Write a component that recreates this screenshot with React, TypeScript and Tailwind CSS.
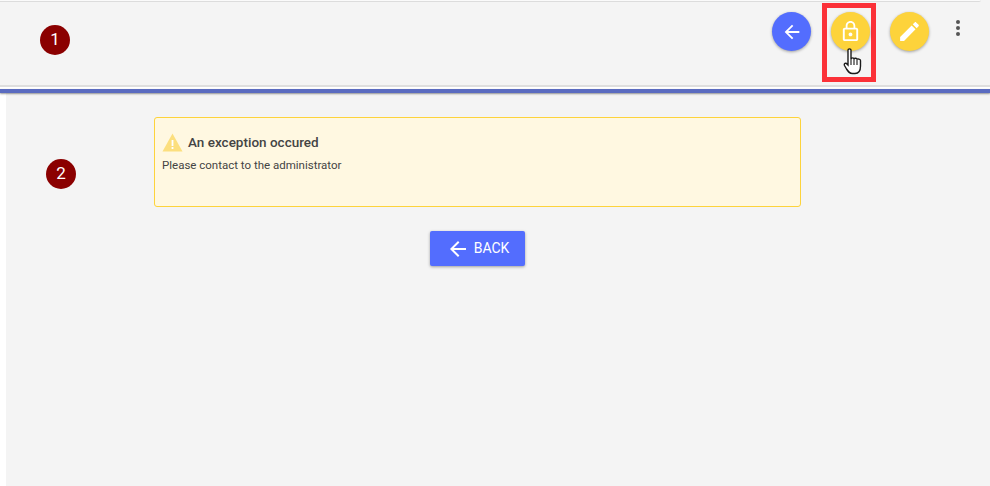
function Badge({ n, className }: { n: number; className: string }) {
	return (
		<div className={`absolute flex h-[30px] w-[30px] items-center justify-center rounded-full bg-[#8b0000] text-[17px] text-white ${className}`}>
			{n}
		</div>
	)
}

function Fab({ color, path, size }: { color: string; path: string; size: number }) {
	return (
		<div className={`flex h-[39px] w-[39px] items-center justify-center rounded-full shadow-[0_1px_3px_rgba(0,0,0,0.35)] ${color}`}>
			<svg width={size} height={size} viewBox="0 0 24 24" fill="white">
				<path d={path} />
			</svg>
		</div>
	)
}

const ARROW = "M20 11H7.83l5.59-5.59L12 4l-8 8 8 8 1.41-1.41L7.83 13H20v-2z"
const LOCK =
	"M12 17c1.1 0 2-.9 2-2s-.9-2-2-2-2 .9-2 2 .9 2 2 2zm6-9h-1V6c0-2.76-2.24-5-5-5S7 3.24 7 6v2H6c-1.1 0-2 .9-2 2v10c0 1.1.9 2 2 2h12c1.1 0 2-.9 2-2V10c0-1.1-.9-2-2-2zM8.9 6c0-1.71 1.39-3.1 3.1-3.1s3.1 1.39 3.1 3.1v2H8.9V6zM18 20H6V10h12v10z"
const EDIT =
	"M3 17.25V21h3.75L17.81 9.94l-3.75-3.75L3 17.25zM20.71 7.04c.39-.39.39-1.02 0-1.41l-2.34-2.34c-.39-.39-1.02-.39-1.41 0l-1.83 1.83 3.75 3.75 1.83-1.83z"

export default function App() {
	return (
		<div className="relative h-[486px] w-[990px] overflow-hidden bg-white font-['Roboto',sans-serif]">
			{/* Top edge */}
			<div className="flex h-[2px] bg-[#f4f4f4]">
				<div className="w-[981px] rounded-br-[2px] border-b border-[#dcdcdc] bg-[#fafafa]" />
			</div>

			{/* Toolbar */}
			<div className="h-[85px] border-b-2 border-[#dedede] bg-[#f4f4f4] pr-[30px] pt-[1px]">
				<div className="flex items-start justify-end">
					<div className="mt-[9px]">
						<Fab color="bg-[#536dfe]" path={ARROW} size={22} />
					</div>
					<div className="ml-[11px] border-[5px] border-[#fb3138] pb-[26px] pl-[4px] pr-[1px] pt-[4px]">
						<Fab color="bg-[#fdd33b]" path={LOCK} size={23} />
					</div>
					<div className="ml-[14px] mt-[9px]">
						<Fab color="bg-[#fdd33b]" path={EDIT} size={25} />
					</div>
					<div className="ml-[27px] mt-[17px] flex flex-col gap-[2px]">
						<div className="h-[4px] w-[4px] rounded-full bg-[#555]" />
						<div className="h-[4px] w-[4px] rounded-full bg-[#555]" />
						<div className="h-[4px] w-[4px] rounded-full bg-[#555]" />
					</div>
				</div>
			</div>

			{/* Content */}
			<div className="relative z-10 mt-[2px] h-[4px] bg-[#5a6bc0] shadow-[0_1px_2px_rgba(0,0,0,0.4)]" />
			<div className="ml-[6px] h-[393px] bg-[#f4f4f4] pl-[148px] pt-[24px]">
				<div className="w-[647px]">
					<div className="h-[90px] rounded-[3px] border border-[#fdd33b] bg-[#fff8e1] px-[7px] pt-[14px]">
						<div className="flex items-center gap-[5px]">
							<svg width="21" height="19" viewBox="0 0 21 19">
								<path d="M10.5 0.5 L20.5 18.5 L0.5 18.5 Z" fill="#fcdf7e" />
								<rect x="9.6" y="7" width="1.8" height="6" fill="#fff" />
								<rect x="9.6" y="14" width="1.8" height="2" fill="#fff" />
							</svg>
							<span className="text-[13.5px] font-medium text-[#444]">An exception occured</span>
						</div>
						<p className="mt-[5px] text-[11.5px] text-[#444]">Please contact to the administrator</p>
					</div>
					<div className="mt-[24px] flex justify-center">
						<button className="flex h-[35px] w-[95px] items-center justify-center gap-[4px] rounded-[2px] bg-[#536dfe] text-[14px] text-white shadow-[0_1px_3px_rgba(0,0,0,0.35)]">
							<svg width="24" height="24" viewBox="0 0 24 24" fill="white">
								<path d={ARROW} />
							</svg>
							BACK
						</button>
					</div>
				</div>
			</div>

			<Badge n={1} className="left-[40px] top-[25px]" />
			<Badge n={2} className="left-[46px] top-[159px]" />

			{/* Pointer cursor */}
			<svg className="absolute left-[843px] top-[47px]" width="22" height="28" viewBox="0 0 22 28">
				<path
					d="M5 3 C5 1.5 8 1.5 8 3 V12 C8.5 10.5 11 10.5 11 12 C11.5 11 14 11 14 12.5 C14.5 11.5 17.5 12 17.5 13.5 V19 C17.5 23 16 26.5 12 26.5 H9.5 C6.5 26.5 5.5 25 3.5 22 L1.5 18.5 C0.5 16.5 3 15.5 4 17 L5 18 Z"
					fill="white"
					stroke="#1a1a1a"
					strokeWidth="1.4"
				/>
				<path d="M8 12 V18 M11 12 V18 M14 12.5 V18" stroke="#1a1a1a" strokeWidth="1.1" />
			</svg>
		</div>
	)
}
